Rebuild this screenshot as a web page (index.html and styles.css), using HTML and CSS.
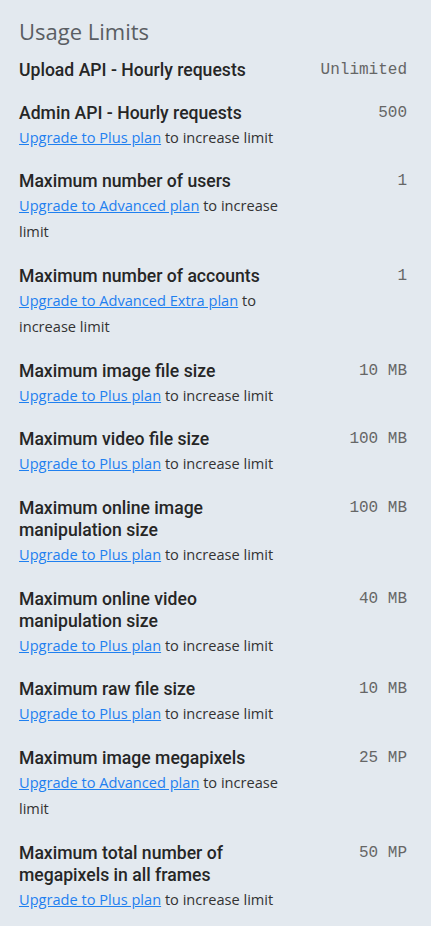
FILE: index.html
```html
<!DOCTYPE html>
<html lang="en">
<head>
    <meta charset="UTF-8">
    <meta name="viewport" content="width=device-width, initial-scale=1.0">
    <title>Usage Limits</title>
    <link rel="stylesheet" href="styles.css">
</head>
<body>
    <div class="container">
        <h2 class="title">Usage Limits</h2>
        <div class="limits">
            <div class="limit-row">
                <div class="limit-info">
                    <div class="limit-name">Upload API - Hourly requests</div>
                </div>
                <div class="limit-value">Unlimited</div>
            </div>
            <div class="limit-row">
                <div class="limit-info">
                    <div class="limit-name">Admin API - Hourly requests</div>
                    <div class="limit-upgrade"><a href="#">Upgrade to Plus plan</a> to increase limit</div>
                </div>
                <div class="limit-value">500</div>
            </div>
            <div class="limit-row">
                <div class="limit-info">
                    <div class="limit-name">Maximum number of users</div>
                    <div class="limit-upgrade"><a href="#">Upgrade to Advanced plan</a> to increase limit</div>
                </div>
                <div class="limit-value">1</div>
            </div>
            <div class="limit-row">
                <div class="limit-info">
                    <div class="limit-name">Maximum number of accounts</div>
                    <div class="limit-upgrade"><a href="#">Upgrade to Advanced Extra plan</a> to increase limit</div>
                </div>
                <div class="limit-value">1</div>
            </div>
            <div class="limit-row">
                <div class="limit-info">
                    <div class="limit-name">Maximum image file size</div>
                    <div class="limit-upgrade"><a href="#">Upgrade to Plus plan</a> to increase limit</div>
                </div>
                <div class="limit-value">10 MB</div>
            </div>
            <div class="limit-row">
                <div class="limit-info">
                    <div class="limit-name">Maximum video file size</div>
                    <div class="limit-upgrade"><a href="#">Upgrade to Plus plan</a> to increase limit</div>
                </div>
                <div class="limit-value">100 MB</div>
            </div>
            <div class="limit-row">
                <div class="limit-info">
                    <div class="limit-name">Maximum online image manipulation size</div>
                    <div class="limit-upgrade"><a href="#">Upgrade to Plus plan</a> to increase limit</div>
                </div>
                <div class="limit-value">100 MB</div>
            </div>
            <div class="limit-row">
                <div class="limit-info">
                    <div class="limit-name">Maximum online video manipulation size</div>
                    <div class="limit-upgrade"><a href="#">Upgrade to Plus plan</a> to increase limit</div>
                </div>
                <div class="limit-value">40 MB</div>
            </div>
            <div class="limit-row">
                <div class="limit-info">
                    <div class="limit-name">Maximum raw file size</div>
                    <div class="limit-upgrade"><a href="#">Upgrade to Plus plan</a> to increase limit</div>
                </div>
                <div class="limit-value">10 MB</div>
            </div>
            <div class="limit-row">
                <div class="limit-info">
                    <div class="limit-name">Maximum image megapixels</div>
                    <div class="limit-upgrade"><a href="#">Upgrade to Advanced plan</a> to increase limit</div>
                </div>
                <div class="limit-value">25 MP</div>
            </div>
            <div class="limit-row">
                <div class="limit-info">
                    <div class="limit-name">Maximum total number of megapixels in all frames</div>
                    <div class="limit-upgrade"><a href="#">Upgrade to Plus plan</a> to increase limit</div>
                </div>
                <div class="limit-value">50 MP</div>
            </div>
        </div>
    </div>
</body>
</html>
```

FILE: styles.css
```css
body {
    font-family: "Open Sans", "Noto Sans", sans-serif;
    margin: 0;
    padding: 0;
    background-color: #e3e9ef;
    color: #1f1f1f;
}
.container {
    padding: 17px 24px 20px 19px;
}
.title {
    margin: 0 0 14px;
    font-size: 22px;
    line-height: 28px;
    font-weight: 400;
    color: #5a5e63;
}
.limits {
    display: flex;
    flex-direction: column;
    gap: 20.67px;
}
.limit-row {
    display: flex;
    justify-content: space-between;
    align-items: flex-start;
}
.limit-info {
    max-width: 268px;
}
.limit-name {
    font-family: Roboto, "Open Sans", sans-serif;
    font-size: 17.6px;
    line-height: 22px;
    font-weight: 500;
    color: #262626;
}
.limit-upgrade {
    font-size: 14.6px;
    line-height: 26px;
    color: #333;
}
.limit-upgrade a {
    color: #1f80f0;
    text-decoration: underline;
}
.limit-value {
    font-family: "Liberation Mono", monospace;
    font-size: 16px;
    line-height: 22px;
    color: #666;
    white-space: nowrap;
}
```
